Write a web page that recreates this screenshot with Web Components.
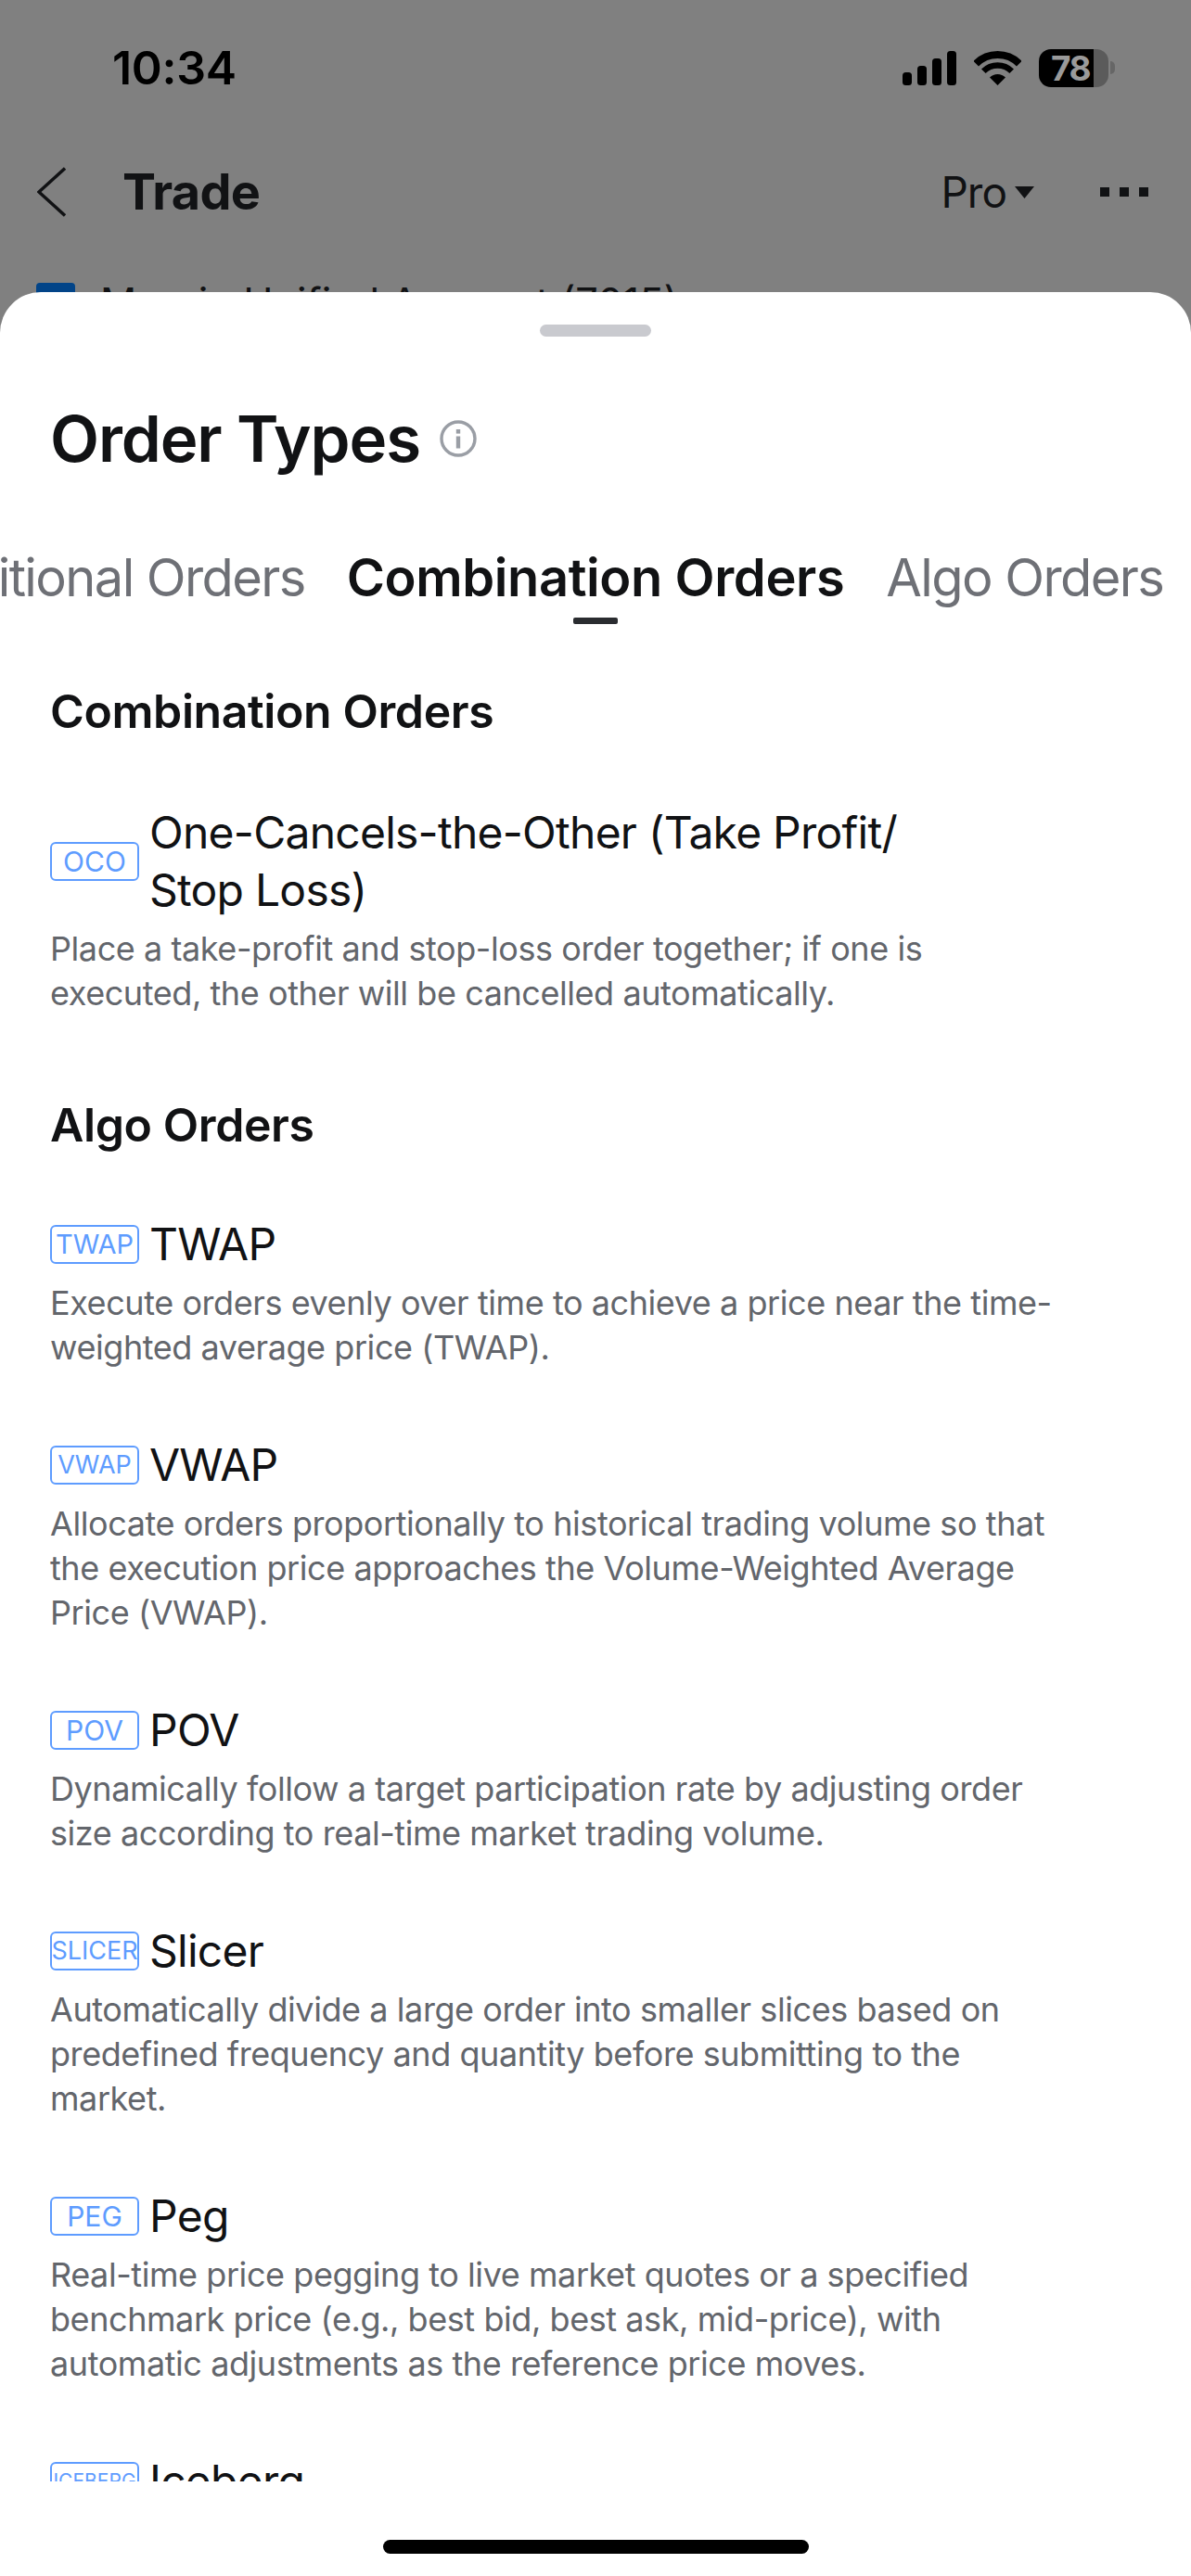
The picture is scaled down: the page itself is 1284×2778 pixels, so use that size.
<!DOCTYPE html>
<html lang="en">
<head>
<meta charset="utf-8">
<title>Order Types</title>
<style>
  html, body { margin: 0; padding: 0; background: #808080; }
  body { font-family: Inter, "Noto Sans", sans-serif; color: #111214; }
</style>
</head>
<body>
<trade-screen>
  <status-bar time="10:34" level="78"></status-bar>
  <trade-nav heading="Trade" mode="Pro"></trade-nav>
  <account-row>Margin Unified Account (7015)</account-row>

  <order-sheet slot="sheet" heading="Order Types">
    <tab-strip slot="tabs">
      <order-tab class="before">Conditional Orders</order-tab>
      <order-tab active>Combination Orders</order-tab>
      <order-tab class="after">Algo Orders</order-tab>
    </tab-strip>

    <order-section heading="Combination Orders" class="first">
      <order-row tag="OCO" name="One-Cancels-the-Other (Take Profit/<br>Stop Loss)">
        Place a take-profit and stop-loss order together; if one is<br>
        executed, the other will be cancelled automatically.
      </order-row>
    </order-section>

    <order-section heading="Algo Orders">
      <order-row tag="TWAP" tag-size="29" name="TWAP">
        Execute orders evenly over time to achieve a price near the time-<br>
        weighted average price (TWAP).
      </order-row>
      <order-row tag="VWAP" tag-size="27" name="VWAP">
        Allocate orders proportionally to historical trading volume so that<br>
        the execution price approaches the Volume-Weighted Average<br>
        Price (VWAP).
      </order-row>
      <order-row tag="POV" name="POV">
        Dynamically follow a target participation rate by adjusting order<br>
        size according to real-time market trading volume.
      </order-row>
      <order-row tag="SLICER" tag-size="27" name="Slicer">
        Automatically divide a large order into smaller slices based on<br>
        predefined frequency and quantity before submitting to the<br>
        market.
      </order-row>
      <order-row tag="PEG" name="Peg">
        Real-time price pegging to live market quotes or a specified<br>
        benchmark price (e.g., best bid, best ask, mid-price), with<br>
        automatic adjustments as the reference price moves.
      </order-row>
      <order-row tag="ICEBERG" tag-size="21" name="Iceberg">
        Split a large order into smaller visible portions to reduce<br>
        market impact.
      </order-row>
    </order-section>
  </order-sheet>
</trade-screen>

<script>
const FONT_STACK = `Inter, "Noto Sans", sans-serif`;

class TradeScreen extends HTMLElement {
  constructor() {
    super();
    this.attachShadow({ mode: "open" });
    this.shadowRoot.innerHTML = `
      <style>
        :host {
          display: block;
          position: relative;
          width: 1284px;
          height: 2778px;
          overflow: hidden;
          background: #808080;
          font-family: ${FONT_STACK};
        }
        /* the sheet lies over the dimmed page */
        .overlay {
          position: absolute;
          left: 0;
          right: 0;
          top: 315px;
          bottom: 0;
          display: flex;
        }
      </style>
      <slot></slot>
      <div class="overlay"><slot name="sheet"></slot></div>
    `;
  }
}

class StatusBar extends HTMLElement {
  constructor() {
    super();
    this.attachShadow({ mode: "open" });
    this.shadowRoot.innerHTML = `
      <style>
        :host {
          display: flex;
          align-items: center;
          justify-content: space-between;
          box-sizing: border-box;
          height: 146px;
          padding: 0 82px 0 121px;
          color: #000;
        }
        .time { font-size: 50px; font-weight: 600; letter-spacing: -0.3px; line-height: 60px; }
        .icons { display: flex; align-items: center; }
        svg { display: block; }
        .wifi { margin-left: 19px; }
        .battery {
          margin-left: 19px;
          width: 75px;
          height: 41px;
          box-sizing: border-box;
          padding-left: 13px;
          border-radius: 13px;
          background: linear-gradient(90deg, #000 59px, #5b5b5b 59px);
          color: #9a9a9a;
          font-size: 37px;
          font-weight: 700;
          line-height: 41px;
          letter-spacing: -1.5px;
        }
        .nub {
          width: 5px;
          height: 14px;
          margin-left: 2px;
          border-radius: 0 7px 7px 0;
          background: #666;
        }
      </style>
      <span class="time"></span>
      <div class="icons">
        <svg width="58" height="37" viewBox="0 0 58 37" fill="#000">
          <rect x="0" y="23" width="10" height="14" rx="3.5"/>
          <rect x="16" y="16" width="10" height="21" rx="3.5"/>
          <rect x="32" y="8" width="10" height="29" rx="3.5"/>
          <rect x="48" y="0" width="10" height="37" rx="3.5"/>
        </svg>
        <svg class="wifi" width="51" height="37" viewBox="0 0 51 37">
          <path d="M2.2 13.7A33 33 0 0 1 48.8 13.7" fill="none" stroke="#000" stroke-width="8"/>
          <path d="M10.3 21.8A21.5 21.5 0 0 1 40.7 21.8" fill="none" stroke="#000" stroke-width="6.5"/>
          <path d="M25.5 37L17 28.5A12 12 0 0 1 34 28.5Z" fill="#000"/>
        </svg>
        <div class="battery"></div>
        <div class="nub"></div>
      </div>
    `;
    this.shadowRoot.querySelector(".time").textContent = this.getAttribute("time");
    this.shadowRoot.querySelector(".battery").textContent = this.getAttribute("level");
  }
}

class TradeNav extends HTMLElement {
  constructor() {
    super();
    this.attachShadow({ mode: "open" });
    this.shadowRoot.innerHTML = `
      <style>
        :host {
          display: flex;
          align-items: center;
          box-sizing: border-box;
          height: 119px;
          padding: 3px 46px 0 40px;
          color: #111214;
        }
        h1 { margin: 0 0 0 61px; font-size: 54px; font-weight: 700; letter-spacing: -0.7px; line-height: 64px; flex: 1; }
        .mode { font-size: 46px; font-weight: 400; letter-spacing: -1px; line-height: 56px; }
        .caret { margin-left: 9px; }
        .more { display: flex; gap: 11px; margin-left: 71px; }
        .more i { display: block; width: 10px; height: 10px; background: #111214; }
        svg { display: block; }
      </style>
      <svg width="31" height="54" viewBox="0 0 31 54" fill="none">
        <path d="M30 1.5L2 27L30 52.5" stroke="#111214" stroke-width="3.4"/>
      </svg>
      <h1></h1>
      <span class="mode"></span>
      <svg class="caret" width="21" height="13" viewBox="0 0 21 13"><path d="M0 0H21L10.5 13Z" fill="#111214"/></svg>
      <div class="more"><i></i><i></i><i></i></div>
    `;
    this.shadowRoot.querySelector("h1").textContent = this.getAttribute("heading");
    this.shadowRoot.querySelector(".mode").textContent = this.getAttribute("mode");
  }
}

class AccountRow extends HTMLElement {
  constructor() {
    super();
    this.attachShadow({ mode: "open" });
    this.shadowRoot.innerHTML = `
      <style>
        :host {
          display: flex;
          align-items: flex-start;
          gap: 27px;
          padding: 0 0 0 39px;
          margin-top: 34px;
          font-size: 43.4px;
          line-height: 54px;
          color: #111214;
        }
        .mark { width: 42px; height: 42px; border-radius: 4px; background: #024488; margin-top: 6px; }
      </style>
      <div class="mark"></div>
      <slot></slot>
    `;
  }
}

class OrderSheet extends HTMLElement {
  constructor() {
    super();
    this.attachShadow({ mode: "open" });
    this.shadowRoot.innerHTML = `
      <style>
        :host {
          flex: 1;
          display: flex;
          flex-direction: column;
          min-width: 0;
          background: #fff;
          border-radius: 44px 44px 0 0;
          color: #111214;
        }
        .handle {
          align-self: center;
          width: 120px;
          height: 13px;
          margin-top: 35px;
          border-radius: 7px;
          background: #c9cacf;
        }
        header {
          display: flex;
          align-items: center;
          gap: 21px;
          margin: 68px 0 0 54px;
          height: 84px;
        }
        h2 { margin: 0; font-size: 69px; font-weight: 600; letter-spacing: -1.1px; line-height: 84px; }
        .body {
          flex: 1;
          min-height: 0;
          overflow: hidden;
          padding: 64px 130px 0 54px;
        }
        .home { flex: none; display: flex; justify-content: center; height: 102px; }
        .home i { display: block; width: 459px; height: 15px; margin-top: 63px; border-radius: 8px; background: #000; }
        svg { display: block; }
      </style>
      <div class="handle"></div>
      <header>
        <h2></h2>
        <svg width="40" height="40" viewBox="0 0 40 40" fill="none">
          <circle cx="20" cy="20" r="18" stroke="#9a9ea5" stroke-width="3.4"/>
          <rect x="17.8" y="17.5" width="4.4" height="13" fill="#9a9ea5"/>
          <rect x="17.8" y="10" width="4.4" height="4.6" fill="#9a9ea5"/>
        </svg>
      </header>
      <slot name="tabs"></slot>
      <div class="body"><slot></slot></div>
      <div class="home"><i></i></div>
    `;
    this.shadowRoot.querySelector("h2").textContent = this.getAttribute("heading");
  }
}

class TabStrip extends HTMLElement {
  constructor() {
    super();
    this.attachShadow({ mode: "open" });
    this.shadowRoot.innerHTML = `
      <style>
        :host {
          display: grid;
          grid-template-columns: minmax(0, 1fr) auto minmax(0, 1fr);
          column-gap: 45px;
          margin-top: 73px;
          overflow: hidden;
        }
        ::slotted(.before) { justify-self: end; }
        ::slotted(.after) { justify-self: start; }
      </style>
      <slot></slot>
    `;
  }
}

class OrderTab extends HTMLElement {
  constructor() {
    super();
    this.attachShadow({ mode: "open" });
    this.shadowRoot.innerHTML = `
      <style>
        :host {
          display: flex;
          flex-direction: column;
          align-items: center;
          white-space: nowrap;
          font-size: 56px;
          font-weight: 400;
          letter-spacing: -1.6px;
          line-height: 70px;
          color: #6e7076;
        }
        :host([active]) { font-weight: 600; color: #111214; letter-spacing: -0.4px; }
        i { display: block; width: 48px; height: 7px; margin-top: 8px; border-radius: 2px; }
        :host([active]) i { background: #2a2c30; }
      </style>
      <slot></slot>
      <i></i>
    `;
  }
}

class OrderSection extends HTMLElement {
  constructor() {
    super();
    this.attachShadow({ mode: "open" });
    this.shadowRoot.innerHTML = `
      <style>
        :host { display: block; margin-bottom: 88px; }
        h3 { margin: 0 0 70px; font-size: 50px; font-weight: 600; letter-spacing: -0.4px; line-height: 60px; }
        :host(:not(.first)) h3 { margin-bottom: 68px; }
        .rows { display: flex; flex-direction: column; gap: 72px; }
      </style>
      <h3></h3>
      <div class="rows"><slot></slot></div>
    `;
    this.shadowRoot.querySelector("h3").textContent = this.getAttribute("heading");
  }
}

class OrderRow extends HTMLElement {
  constructor() {
    super();
    this.attachShadow({ mode: "open" });
    this.shadowRoot.innerHTML = `
      <style>
        :host { display: block; }
        .top { display: flex; align-items: center; gap: 12px; }
        .tag {
          flex: none;
          box-sizing: border-box;
          width: 96px;
          height: 42px;
          display: flex;
          align-items: center;
          justify-content: center;
          border: 2px solid #5e9cff;
          border-radius: 6px;
          color: #5e9cff;
          font-weight: 400;
          line-height: 38px;
          white-space: nowrap;
          overflow: hidden;
        }
        .name { font-size: 48px; font-weight: 400; letter-spacing: -0.75px; line-height: 62px; white-space: nowrap; margin-left: -1px; }
        .desc { margin-top: 8px; font-size: 36px; font-weight: 400; letter-spacing: -0.43px; line-height: 48px; color: #63666c; white-space: nowrap; }
      </style>
      <div class="top"><span class="tag"></span><span class="name"></span></div>
      <div class="desc"><slot></slot></div>
    `;
    const tag = this.shadowRoot.querySelector(".tag");
    tag.textContent = this.getAttribute("tag");
    tag.style.fontSize = (this.getAttribute("tag-size") || 30) + "px";
    this.shadowRoot.querySelector(".name").innerHTML = this.getAttribute("name");
  }
}

customElements.define("trade-screen", TradeScreen);
customElements.define("status-bar", StatusBar);
customElements.define("trade-nav", TradeNav);
customElements.define("account-row", AccountRow);
customElements.define("order-sheet", OrderSheet);
customElements.define("tab-strip", TabStrip);
customElements.define("order-tab", OrderTab);
customElements.define("order-section", OrderSection);
customElements.define("order-row", OrderRow);
</script>
</body>
</html>
